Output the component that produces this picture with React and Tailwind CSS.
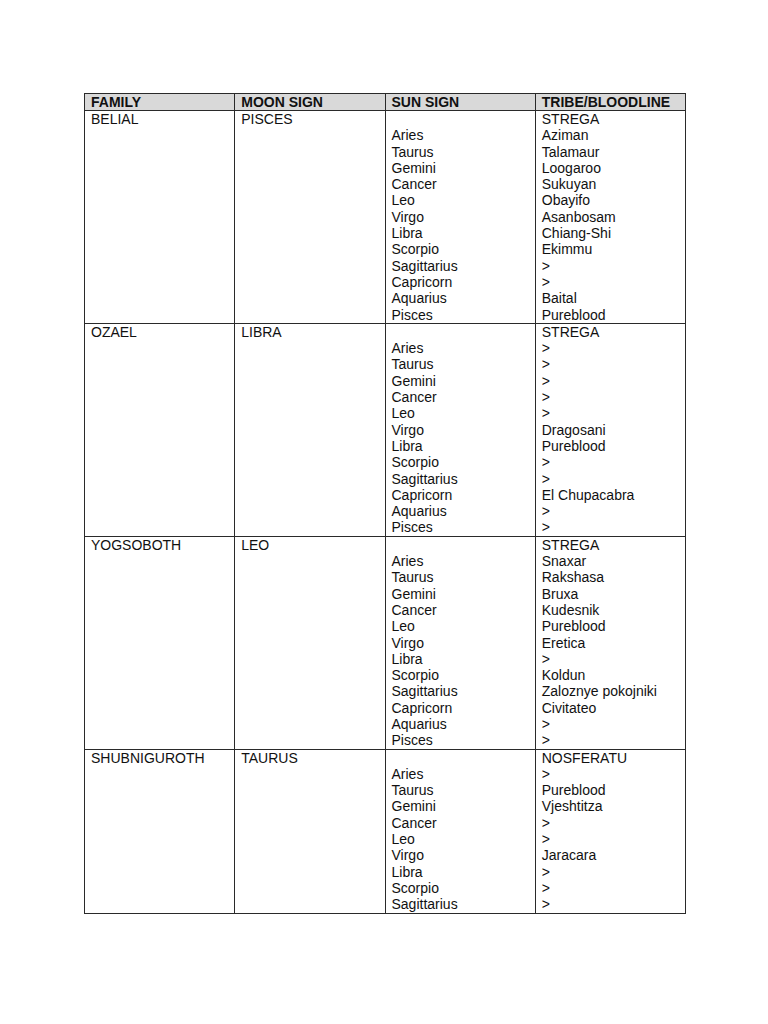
const SIGNS = ['Aries', 'Taurus', 'Gemini', 'Cancer', 'Leo', 'Virgo', 'Libra', 'Scorpio', 'Sagittarius', 'Capricorn', 'Aquarius', 'Pisces']

const ROWS = [
  {
    family: 'BELIAL',
    moon: 'PISCES',
    signs: SIGNS,
    tribes: ['STREGA', 'Aziman', 'Talamaur', 'Loogaroo', 'Sukuyan', 'Obayifo', 'Asanbosam', 'Chiang-Shi', 'Ekimmu', '>', '>', 'Baital', 'Pureblood'],
  },
  {
    family: 'OZAEL',
    moon: 'LIBRA',
    signs: SIGNS,
    tribes: ['STREGA', '>', '>', '>', '>', '>', 'Dragosani', 'Pureblood', '>', '>', 'El Chupacabra', '>', '>'],
  },
  {
    family: 'YOGSOBOTH',
    moon: 'LEO',
    signs: SIGNS,
    tribes: ['STREGA', 'Snaxar', 'Rakshasa', 'Bruxa', 'Kudesnik', 'Pureblood', 'Eretica', '>', 'Koldun', 'Zaloznye pokojniki', 'Civitateo', '>', '>'],
  },
  {
    family: 'SHUBNIGUROTH',
    moon: 'TAURUS',
    signs: SIGNS.slice(0, 9),
    tribes: ['NOSFERATU', '>', 'Pureblood', 'Vjeshtitza', '>', '>', 'Jaracara', '>', '>', '>'],
  },
]

function Lines({ items }) {
  return (
    <div className="flex flex-col">
      {items.map((t, i) => (
        <div key={i} className="h-[16.3px] leading-[16.3px] whitespace-nowrap">{t}</div>
      ))}
    </div>
  )
}

const cell = 'border border-[#2a2a2a] pl-[6px] pr-1 p-0 align-top w-[150px]'

export default function App() {
  return (
    <div className="min-h-[1024px] bg-white pt-[93px] pl-[84px] text-[14px] text-[#111]" style={{ fontFamily: '"Liberation Sans", Arial, sans-serif' }}>
      <table className="border-collapse table-fixed w-[602px]">
        <thead>
          <tr className="bg-[#d9d9d9]">
            {['FAMILY', 'MOON SIGN', 'SUN SIGN', 'TRIBE/BLOODLINE'].map((h) => (
              <th key={h} className={`${cell} leading-[16px] text-left font-bold`}>{h}</th>
            ))}
          </tr>
        </thead>
        <tbody>
          {ROWS.map((r) => (
            <tr key={r.family}>
              <td className={cell}><Lines items={[r.family]} /></td>
              <td className={cell}><Lines items={[r.moon]} /></td>
              <td className={cell}><Lines items={['\u00a0', ...r.signs]} /></td>
              <td className={cell}><Lines items={r.tribes} /></td>
            </tr>
          ))}
        </tbody>
      </table>
    </div>
  )
}
